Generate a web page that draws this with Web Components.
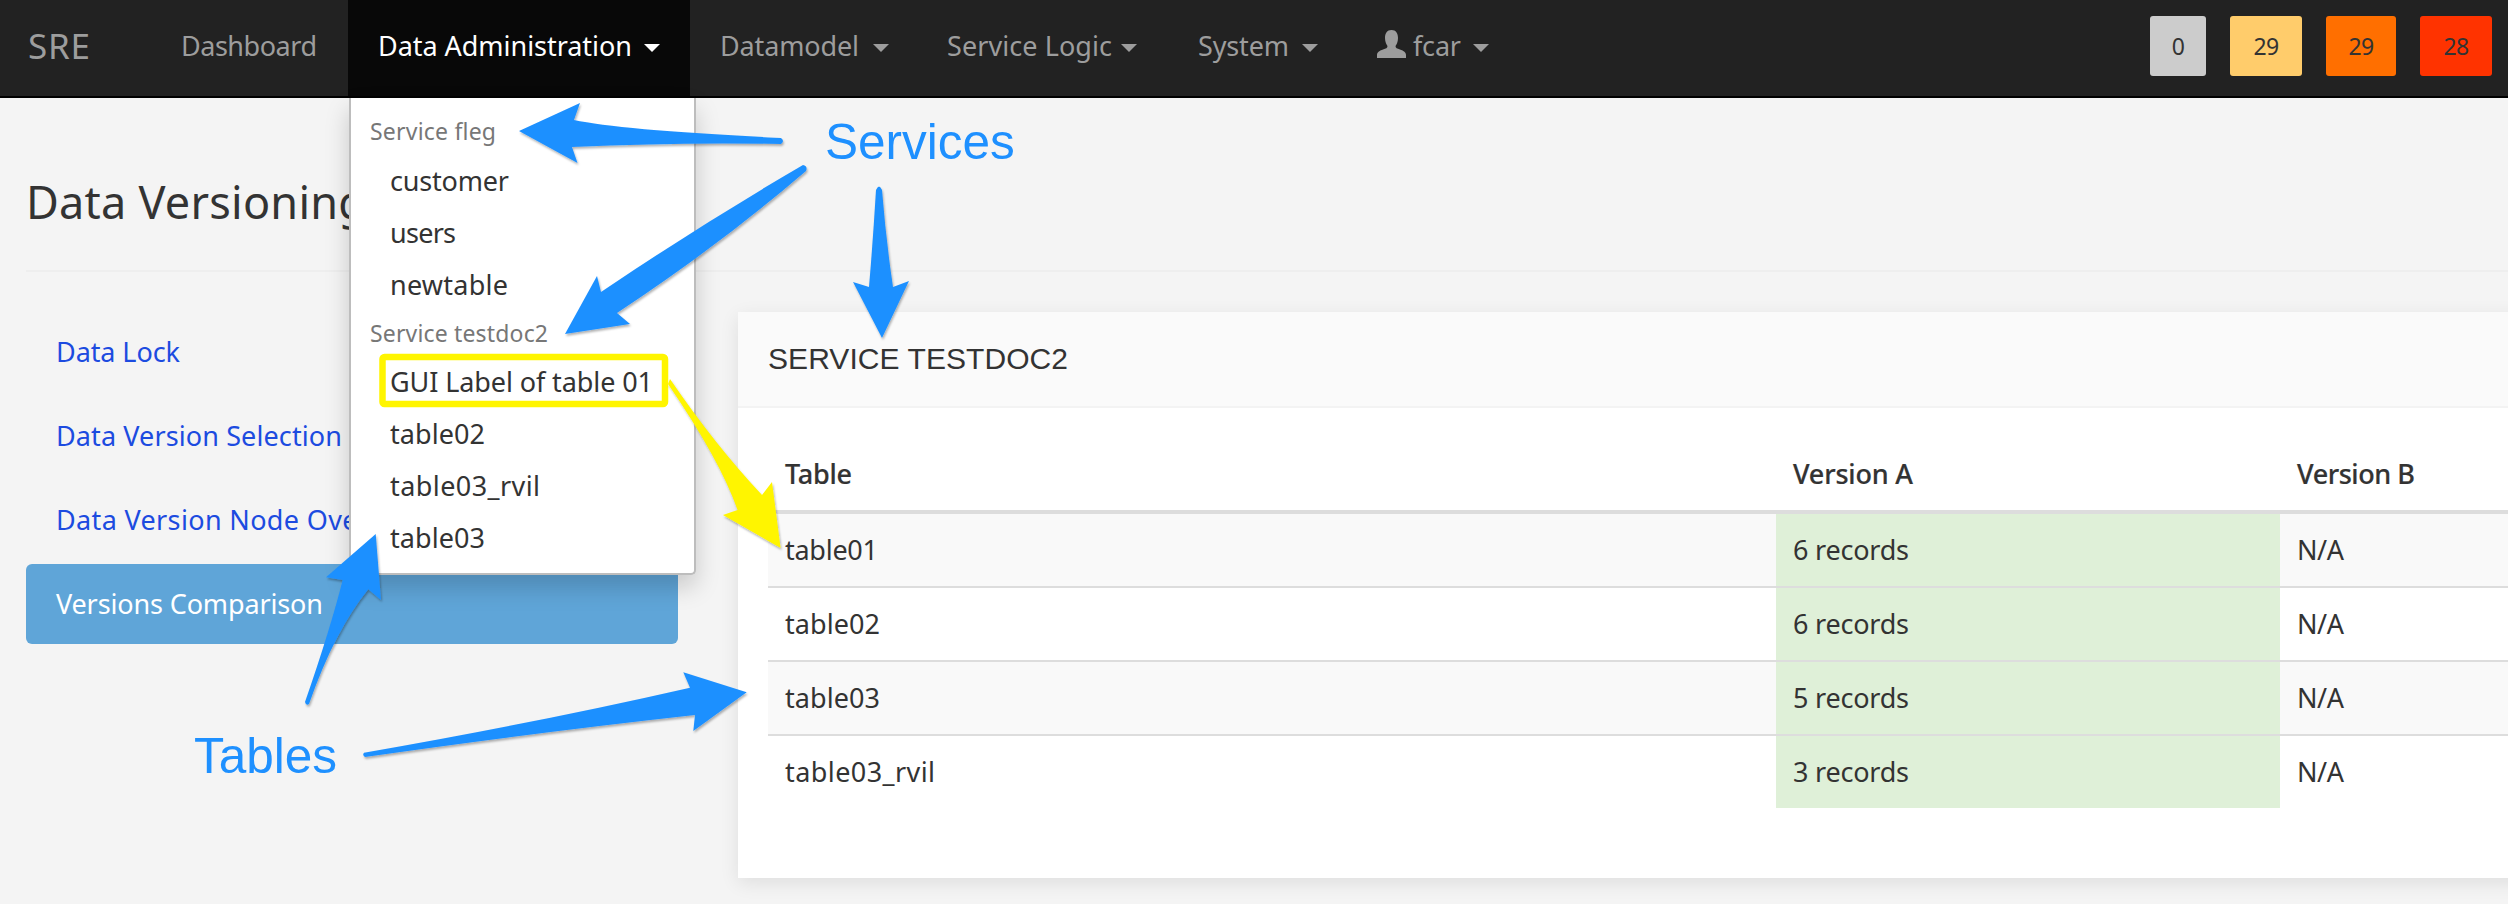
<!DOCTYPE html>
<html lang="en">
<head>
<meta charset="utf-8">
<title>SRE</title>
<style>
  html, body { margin: 0; padding: 0; width: 2508px; height: 904px; overflow: hidden; background: #f4f4f4; }
  body { position: relative; font-family: "Noto Sans", "Open Sans", sans-serif; font-size: 27px; color: #333; }
</style>
</head>
<body>
  <sre-navbar>
    <nav-brand>SRE</nav-brand>
    <nav-item w="136" style="--w:197px;--pl:30px">Dashboard</nav-item>
    <nav-item w="254" caret active style="--w:342px;--pl:30px;--gap:12px">Data Administration</nav-item>
    <nav-item w="139" caret style="--w:228px;--pl:30px;--gap:14px">Datamodel</nav-item>
    <nav-item w="165" caret style="--w:250px;--pl:29px;--gap:9px">Service Logic</nav-item>
    <nav-item w="91" caret style="--w:179px;--pl:30px;--gap:13px">System</nav-item>
    <nav-item w="48" caret user style="--w:171px;--pl:30px;--gap:12px">fcar</nav-item>
    <alert-badge slot="right" style="--w:56px;--bg:#cccccc">0</alert-badge>
    <alert-badge slot="right" style="--w:72px;--bg:#ffcc6b">29</alert-badge>
    <alert-badge slot="right" style="--w:70px;--bg:#ff6f00">29</alert-badge>
    <alert-badge slot="right" style="--w:72px;--bg:#ff3300">28</alert-badge>
  </sre-navbar>

  <page-main>
    <page-title>Data Versioning</page-title>
    <side-pills slot="side">
      <pill-link w="124">Data Lock</pill-link>
      <pill-link w="286">Data Version Selection</pill-link>
      <pill-link w="371">Data Version Node Overview</pill-link>
      <pill-link w="267" active>Versions Comparison</pill-link>
    </side-pills>
    <service-panel slot="content" heading="SERVICE TESTDOC2"></service-panel>
  </page-main>

  <drop-menu>
    <menu-header w="126">Service fleg</menu-header>
    <menu-link w="119">customer</menu-link>
    <menu-link w="66">users</menu-link>
    <menu-link w="118">newtable</menu-link>
    <menu-header w="178" second>Service testdoc2</menu-header>
    <menu-link w="263">GUI Label of table 01</menu-link>
    <menu-link w="95">table02</menu-link>
    <menu-link w="150">table03_rvil</menu-link>
    <menu-link w="95">table03</menu-link>
  </drop-menu>

  <annotation-layer></annotation-layer>

<script>
/* Text with a target ink width: the letter spacing is solved from the natural width. */
customElements.define('fit-text', class extends HTMLElement {
  constructor() {
    super();
    this.attachShadow({ mode: 'open' }).innerHTML =
      '<style>:host{display:inline-block;white-space:nowrap}</style><slot></slot>';
  }
  connectedCallback() {
    const w = parseFloat(this.getAttribute('w'));
    const n = this.textContent.length;
    if (!w || n < 2) return;
    this.style.letterSpacing = '0px';
    const natural = this.getBoundingClientRect().width;
    this.style.letterSpacing = ((w - natural) / (n - 1)).toFixed(3) + 'px';
  }
});

customElements.define('sre-navbar', class extends HTMLElement {
  constructor() {
    super();
    this.attachShadow({ mode: 'open' }).innerHTML = `<style>
      :host{display:flex;height:96px;background:#222;border-bottom:2px solid #000;box-sizing:content-box}
      .right{margin-left:auto;display:flex;gap:24px;padding:16px 16px 0 0}
    </style><slot></slot><div class="right"><slot name="right"></slot></div>`;
  }
});

customElements.define('nav-brand', class extends HTMLElement {
  constructor() {
    super();
    const t = this.textContent;
    this.attachShadow({ mode: 'open' }).innerHTML = `<style>
      :host{display:block;flex:0 0 151px;box-sizing:border-box;padding-left:28px;height:96px;line-height:92px;font-size:35px;color:#9d9d9d}
    </style><fit-text w="62">${t}</fit-text>`;
  }
});

customElements.define('nav-item', class extends HTMLElement {
  constructor() {
    super();
    const t = this.textContent;
    const icon = this.hasAttribute('user')
      ? `<svg width="29" height="28" viewBox="0 0 29 28"><path fill="#9d9d9d" d="M14.5 0C19 0 21 3.5 21 8C21 12 19.5 14.5 18.5 16C18.5 18 20 18.5 23 19.5C26 20.5 29 22 29 25V28H0V25C0 22 3 20.5 6 19.5C9 18.5 10.5 18 10.5 16C9.5 14.5 8 12 8 8C8 3.5 10 0 14.5 0Z"/></svg>` : '';
    const caret = this.hasAttribute('caret') ? '<i></i>' : '';
    this.attachShadow({ mode: 'open' }).innerHTML = `<style>
      :host{display:flex;flex:0 0 var(--w);box-sizing:border-box;height:96px;align-items:center;padding-left:var(--pl);color:#9d9d9d;line-height:91px}
      :host([active]){background:#080808;color:#fff}
      fit-text{height:91px;margin-bottom:5px}
      svg{flex:none;margin:-8px 7px 0 0}
      i{flex:none;width:0;height:0;margin-left:var(--gap,0);border-top:8px solid currentColor;border-left:8px solid transparent;border-right:8px solid transparent}
    </style>${icon}<fit-text w="${this.getAttribute('w')}">${t}</fit-text>${caret}`;
  }
});

customElements.define('alert-badge', class extends HTMLElement {
  constructor() {
    super();
    this.attachShadow({ mode: 'open' }).innerHTML = `<style>
      :host{display:flex;flex:0 0 var(--w);height:60px;align-items:center;justify-content:center;background:var(--bg);border-radius:3px;color:#333;font-size:23px;letter-spacing:-.6px;padding-bottom:0}
    </style><slot></slot>`;
  }
});

customElements.define('page-main', class extends HTMLElement {
  constructor() {
    super();
    this.attachShadow({ mode: 'open' }).innerHTML = `<style>
      :host{display:block;padding-left:26px}
      .rule{height:2px;background:#eeeeee;margin-bottom:40px}
      .row{display:flex;gap:60px;align-items:flex-start}
    </style><slot></slot><div class="rule"></div>
    <div class="row"><slot name="side"></slot><slot name="content"></slot></div>`;
  }
});

customElements.define('page-title', class extends HTMLElement {
  constructor() {
    super();
    const t = this.textContent;
    this.attachShadow({ mode: 'open' }).innerHTML = `<style>
      :host{display:block;padding-top:74px;margin-bottom:38px;line-height:60px;font-size:45px;color:#333}
    </style><fit-text w="340">${t}</fit-text>`;
  }
});

customElements.define('side-pills', class extends HTMLElement {
  constructor() {
    super();
    this.attachShadow({ mode: 'open' }).innerHTML = `<style>
      :host{display:flex;flex-direction:column;gap:4px;flex:0 0 652px}
    </style><slot></slot>`;
  }
});

customElements.define('pill-link', class extends HTMLElement {
  constructor() {
    super();
    const t = this.textContent;
    this.attachShadow({ mode: 'open' }).innerHTML = `<style>
      :host{display:block;height:80px;box-sizing:border-box;padding-left:30px;line-height:80px;color:#1c4be0;border-radius:6px}
      :host([active]){background:#5fa5d8;color:#fff}
    </style><fit-text w="${this.getAttribute('w')}">${t}</fit-text>`;
  }
});

customElements.define('service-panel', class extends HTMLElement {
  constructor() {
    super();
    const rows = [['table01', '6 records', 93], ['table02', '6 records', 95], ['table03', '5 records', 95], ['table03_rvil', '3 records', 150]];
    const body = rows.map(r => `<tr><td><fit-text w="${r[2]}">${r[0]}</fit-text></td>
      <td class="ok"><fit-text w="116">${r[1]}</fit-text></td>
      <td><fit-text w="47">N/A</fit-text></td></tr>`).join('');
    this.attachShadow({ mode: 'open' }).innerHTML = `<style>
      :host{display:block;flex:0 0 2100px;background:#fff;box-shadow:0 5px 18px rgba(0,0,0,.09)}
      .head{height:94px;box-sizing:border-box;padding-left:30px;line-height:94px;background:#fafafa;border-bottom:0;font:30px/94px "Liberation Sans",Arial,sans-serif;color:#333}
      .sep{height:2px;background:#f3f3f3}
      .body{padding:30px 30px 70px}
      table{border-collapse:separate;border-spacing:0;table-layout:fixed;width:2016px}
      col.a{width:1008px} col.b{width:504px} col.c{width:504px}
      th,td{padding:0 17px;text-align:left;height:72px;box-sizing:content-box;line-height:71px;vertical-align:top}
      th{border-bottom:4px solid #dddddd;font-weight:500;-webkit-text-stroke:.2px #333;height:72px;line-height:72px}
      td{border-bottom:2px solid #dddddd}
      tr:last-child td{border-bottom:0}
      tr:nth-child(odd) td{background:#f9f9f9}
      tr td.ok, tr:nth-child(odd) td.ok{background:#dff0d8}
    </style>
    <div class="head"><fit-text w="300">${this.getAttribute('heading')}</fit-text></div><div class="sep"></div>
    <div class="body"><table>
      <colgroup><col class="a"><col class="b"><col class="c"></colgroup>
      <thead><tr><th><fit-text w="67">Table</fit-text></th><th><fit-text w="120">Version A</fit-text></th><th><fit-text w="118">Version B</fit-text></th></tr></thead>
      <tbody>${body}</tbody>
    </table></div>`;
  }
});

customElements.define('drop-menu', class extends HTMLElement {
  constructor() {
    super();
    this.attachShadow({ mode: 'open' }).innerHTML = `<style>
      :host{position:absolute;left:349px;top:98px;width:347px;height:477px;box-sizing:border-box;background:#fff;border:2px solid #bdbdbd;border-top:0;border-radius:0 0 5px 5px;box-shadow:0 12px 24px rgba(0,0,0,.18);padding-top:11px;display:block}
    </style><slot></slot>`;
  }
});

customElements.define('menu-header', class extends HTMLElement {
  constructor() {
    super();
    const t = this.textContent;
    this.attachShadow({ mode: 'open' }).innerHTML = `<style>
      :host{display:block;height:45.5px;line-height:44px;padding-left:19px;font-size:23px;color:#777}
      :host([second]){height:45px;line-height:45px}
    </style><fit-text w="${this.getAttribute('w')}">${t}</fit-text>`;
  }
});

customElements.define('menu-link', class extends HTMLElement {
  constructor() {
    super();
    const t = this.textContent;
    this.attachShadow({ mode: 'open' }).innerHTML = `<style>
      :host{display:block;height:52px;line-height:52px;padding-left:39px;color:#333}
    </style><fit-text w="${this.getAttribute('w')}">${t}</fit-text>`;
  }
});

customElements.define('annotation-layer', class extends HTMLElement {
  constructor() {
    super();
    this.attachShadow({ mode: 'open' }).innerHTML = `<style>
      :host{position:absolute;left:0;top:0;width:2508px;height:904px;display:block;pointer-events:none}
      svg{position:absolute;left:0;top:0}
      .label{position:absolute;font:49.5px/49.5px "Liberation Sans",Arial,sans-serif;color:#1e90ff}
    </style>
    <svg width="2508" height="904" viewBox="0 0 2508 904">
      <defs><filter id="s" x="-20%" y="-20%" width="140%" height="140%"><feDropShadow dx="1" dy="2" stdDeviation="1.2" flood-color="#000" flood-opacity=".3"/></filter></defs>
      <rect x="382.5" y="357" width="282.5" height="47" rx="2" fill="none" stroke="#fff500" stroke-width="6.5"/>
      <g fill="#1e90ff" filter="url(#s)">
        <path d="M519 131L580 103L574 120Q620 130 781 138Q785 141 781 144Q680 142 572 147L577.5 163Z"/>
        <path d="M565 334L597 276L601 292Q700 225 803 165Q808 166 806 171Q720 245 617 313L630 324Z"/>
        <path d="M882 338L853 282L869 287Q873 240 876 190Q879 183 882 190Q886 240 893 287L909 281Z"/>
        <path d="M375.7 534L326 577.3L342.7 580Q330 630 305 702Q306 706 309 704Q335 630 368.3 589.3L381 600Z"/>
        <path d="M746.7 692.3L683.3 672.3L690 687.7Q540 722 364 752.7Q362 755 365 757Q540 732 695 715L693.3 731Z"/>
      </g>
      <path filter="url(#s)" fill="#fff500" d="M780.6 548L723 515L737.6 510Q720 460 668 384L670 379Q715 445 762 495L772 482Z"/>
    </svg>
    <div class="label" style="left:825px;top:117px">Services</div>
    <div class="label" style="left:194px;top:731px">Tables</div>`;
  }
});
</script>
</body>
</html>
